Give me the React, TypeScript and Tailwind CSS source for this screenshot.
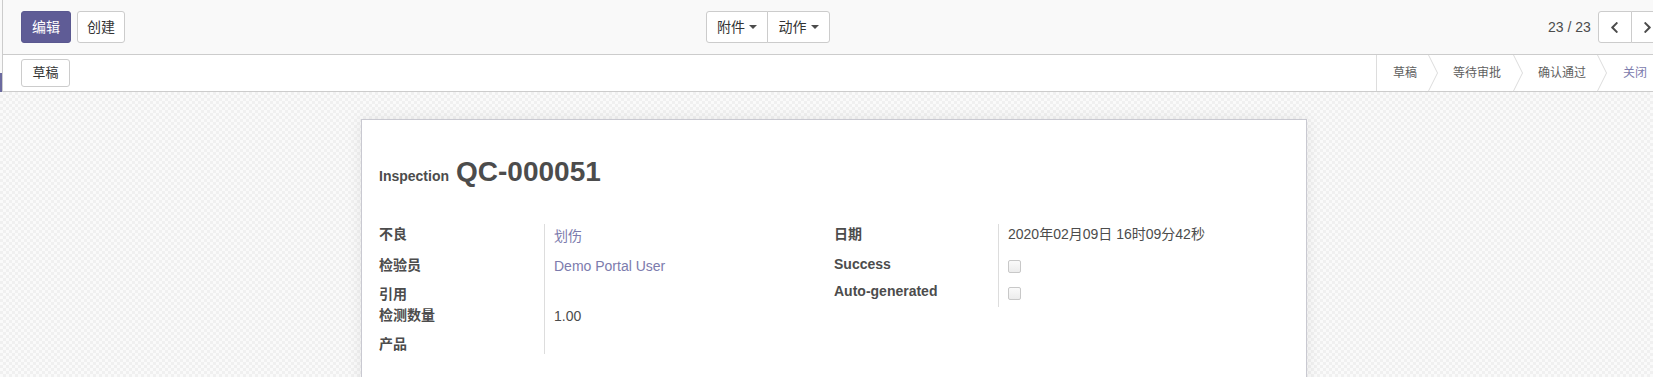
import React from 'react';
import { FaChevronLeft, FaChevronRight } from 'react-icons/fa';

const Caret = () => (
  <span className="ml-[4px] inline-block h-0 w-0 border-x-[4px] border-t-[4px] border-x-transparent border-t-[#4c4c4c] align-middle" />
);

const Chevron = () => (
  <svg width="10" height="36" viewBox="0 0 10 36" className="shrink-0">
    <polyline points="0.5,0 9.5,18 0.5,36" fill="none" stroke="#dcdcdc" strokeWidth="1" />
  </svg>
);

const stages = [
  { name: '草稿', pl: 'pl-[16px]', pr: 'pr-[11px]' },
  { name: '等待审批', pl: 'pl-[15px]', pr: 'pr-[12px]' },
  { name: '确认通过', pl: 'pl-[15px]', pr: 'pr-[11px]' },
  { name: '关闭', pl: 'pl-[16px]', pr: 'pr-[12px]', current: true },
];

const leftRows = [
  { label: '不良', value: '划伤', link: true, h: 'h-[31px]', vpt: 'pt-[2px]' },
  { label: '检验员', value: 'Demo Portal User', link: true, h: 'h-[29px]', vpt: 'pt-[1px]' },
  { label: '引用', value: '', h: 'h-[21px]', vpt: '' },
  { label: '检测数量', value: '1.00', h: 'h-[29px]', vpt: 'pt-[1px]' },
  { label: '产品', value: '', h: 'h-[20px]', vpt: '' },
];

const Checkbox = () => (
  <div className="mt-[6px] h-[13px] w-[13px] rounded-[2px] border border-[#c8c8c8] bg-gradient-to-b from-[#fafafa] to-[#ececec]" />
);

const App = () => {
  return (
    <div
      className="flex h-[377px] w-[1653px] flex-col overflow-hidden bg-white text-[14px] text-[#4c4c4c]"
      style={{ fontFamily: '"Liberation Sans", "Noto Sans CJK SC", sans-serif' }}
    >
      {/* header */}
      <div className="flex shrink-0 overflow-hidden">
        <div className="flex w-[2px] shrink-0 flex-col bg-[#f9f9f9]">
          <div className="h-[73px]" />
          <div className="h-[19px] bg-[#6b6a9f]" />
        </div>
        <div className="min-w-0 flex-1 border-l border-[#cccccc]">
          {/* control panel */}
          <div className="flex h-[55px] items-start border-b border-[#cccccc] bg-[#f9f9f9] pl-[18px] pt-[11px]">
            <div className="flex w-[685px] shrink-0 gap-[6px]">
              <button className="h-[32px] w-[50px] rounded-[3px] border border-[#5a5890] bg-[#5f5c96] text-white">
                编辑
              </button>
              <button className="h-[32px] w-[48px] rounded-[3px] border border-[#cccccc] bg-white text-[#333]">
                创建
              </button>
            </div>
            <div className="flex shrink-0">
              <button className="flex h-[32px] w-[62px] items-center justify-center rounded-l-[3px] border border-[#cccccc] bg-white text-[#333]">
                附件
                <Caret />
              </button>
              <button className="-ml-px flex h-[32px] w-[63px] items-center justify-center rounded-r-[3px] border border-[#cccccc] bg-white text-[#333]">
                动作
                <Caret />
              </button>
            </div>
            <div className="ml-[718px] flex h-[32px] shrink-0 items-center whitespace-nowrap">
              23 / 23
            </div>
            <div className="ml-[7px] flex shrink-0">
              <button className="flex h-[32px] w-[34px] items-center justify-center rounded-l-[3px] border border-[#cccccc] bg-white text-[#4c4c4c]">
                <FaChevronLeft size={13} />
              </button>
              <button className="-ml-px flex h-[32px] w-[34px] items-center justify-center rounded-r-[3px] border border-[#cccccc] bg-white text-[#4c4c4c]">
                <FaChevronRight size={13} />
              </button>
            </div>
          </div>
          {/* status bar */}
          <div className="flex h-[37px] items-start border-b border-[#cccccc] bg-white pl-[18px]">
            <button className="mt-[4px] h-[28px] w-[49px] shrink-0 rounded-[3px] border border-[#cccccc] bg-white text-[13px] text-[#333]">
              草稿
            </button>
            <div className="ml-[1306px] flex h-[36px] shrink-0 items-center border-l border-[#dddddd] text-[12px]">
              {stages.map((s, i) => (
                <React.Fragment key={s.name}>
                  {i > 0 && <Chevron />}
                  <span
                    className={`${s.pl} ${s.pr} whitespace-nowrap ${
                      s.current ? 'text-[#7c7bad]' : 'text-[#5e5e5e]'
                    }`}
                  >
                    {s.name}
                  </span>
                </React.Fragment>
              ))}
            </div>
          </div>
        </div>
      </div>

      {/* body */}
      <div className="min-h-0 flex-1 overflow-hidden bg-[#f5f5f5] pl-[361px] pt-[27px] [background-image:repeating-conic-gradient(#f0f0f0_0%_25%,#fafafa_0%_50%)] [background-size:6px_6px]">
        <div className="h-[300px] w-[946px] border border-[#c9c9d1] bg-white pl-[17px] pt-[36px] shadow-[0_0_14px_rgba(0,0,0,0.08)]">
          <div className="flex items-baseline gap-[7px] font-bold leading-[31px]">
            <span className="text-[14px]">Inspection</span>
            <span className="text-[28px]">QC-000051</span>
          </div>

          <div className="mt-[32px] flex">
            <div className="w-[455px]">
              {leftRows.map((r) => (
                <div key={r.label} className={`flex ${r.h}`}>
                  <div className="w-[165px] font-bold leading-[20px]">{r.label}</div>
                  <div
                    className={`flex-1 border-l border-[#dddddd] pl-[9px] leading-[20px] ${r.vpt} ${
                      r.link ? 'text-[#7c7bad]' : ''
                    }`}
                  >
                    {r.value}
                  </div>
                </div>
              ))}
            </div>
            <div className="flex-1">
              <div className="flex h-[30px]">
                <div className="w-[164px] font-bold leading-[20px]">日期</div>
                <div className="flex-1 border-l border-[#dddddd] pl-[9px] leading-[20px]">
                  2020年02月09日 16时09分42秒
                </div>
              </div>
              <div className="flex h-[27px]">
                <div className="w-[164px] font-bold leading-[20px]">Success</div>
                <div className="flex-1 border-l border-[#dddddd] pl-[9px]">
                  <Checkbox />
                </div>
              </div>
              <div className="flex h-[26px]">
                <div className="w-[164px] font-bold leading-[20px]">Auto-generated</div>
                <div className="flex-1 border-l border-[#dddddd] pl-[9px]">
                  <Checkbox />
                </div>
              </div>
            </div>
          </div>
        </div>
      </div>
    </div>
  );
};

export default App;
